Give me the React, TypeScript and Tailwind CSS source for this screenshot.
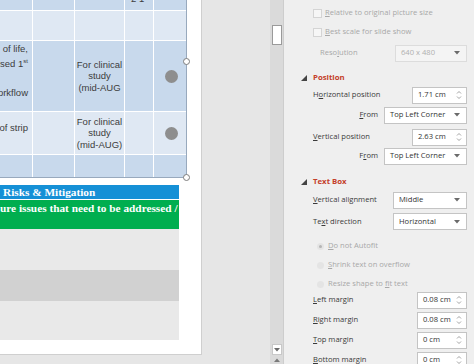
import React from "react";

const panelFont = { fontFamily: '"Open Sans", "Noto Sans", sans-serif' };

const DropArrow = () => (
  <svg width="6" height="4" viewBox="0 0 6 4" className="shrink-0">
    <polygon points="0,0 6,0 3,3.5" fill="#6b6b6b" />
  </svg>
);

const Spin = () => (
  <svg width="6" height="10" viewBox="0 0 6 10" className="shrink-0">
    <polyline points="1,3.5 3,1.5 5,3.5" fill="none" stroke="#8a8a8a" strokeWidth="0.8" />
    <polyline points="1,6.5 3,8.5 5,6.5" fill="none" stroke="#8a8a8a" strokeWidth="0.8" />
  </svg>
);

const Caret = () => (
  <svg width="6" height="6" viewBox="0 0 6 6" className="shrink-0">
    <polygon points="6,0 6,6 0,6" fill="#444" />
  </svg>
);

const U = ({ children }: { children: React.ReactNode }) => (
  <span className="underline underline-offset-[1px]">{children}</span>
);

const Select = ({ value, w, disabled }: { value: string; w: string; disabled?: boolean }) => (
  <div
    className={`${w} h-[17px] flex items-center justify-between pl-[5px] pr-[6px] border ${
      disabled ? "border-[#dcdcdc] bg-[#f4f4f4] text-[#b0b0b0]" : "border-[#c4c4c4] bg-white text-[#333]"
    }`}
  >
    <span>{value}</span>
    <DropArrow />
  </div>
);

const SpinBox = ({ value, w }: { value: string; w: string }) => (
  <div className={`${w} h-[17px] flex items-center justify-between pl-[5px] pr-[4px] border border-[#c4c4c4] bg-white text-[#333]`}>
    <span>{value}</span>
    <Spin />
  </div>
);

const Circle = () => <div className="w-[13px] h-[13px] rounded-full bg-[#8e8e8e]" />;

const Slide = () => {
  const dark = "bg-[#c8d9ec]";
  const light = "bg-[#dfe8f3]";
  const txt = "text-[9.5px] leading-[11.5px] text-[#3c3c3c]";
  return (
    <div className="w-[202px] h-[355px] bg-white border-r border-b border-[#cfcfcf] relative overflow-hidden" style={{ fontFamily: '"Liberation Sans", Arial, sans-serif' }}>
      {/* table */}
      <div className="grid grid-cols-[32px_41px_49px_28px_33px] grid-rows-[10px_29px_70px_42px_22px] gap-px bg-white w-[187px]">
        <div className={dark} />
        <div className={dark} />
        <div className={dark} />
        <div className={`${dark} overflow-hidden text-[9.5px] leading-[10px] text-[#3c3c3c] pl-[6px]`}>
          <div className="-mt-[6px]">2 1</div>
        </div>
        <div className={dark} />

        <div className={light} />
        <div className={light} />
        <div className={light} />
        <div className={light} />
        <div className={light} />

        <div className={`${dark} overflow-hidden text-[9.5px] leading-[14.5px] text-[#3c3c3c] pt-[1px] pr-[4px]`}>
          <div className="flex justify-end whitespace-nowrap">of life,</div>
          <div className="flex justify-end whitespace-nowrap">
            <span>used 1</span>
            <span className="text-[6px] leading-[8px]">st</span>
          </div>
          <div className="h-[14.5px]" />
          <div className="flex justify-end whitespace-nowrap">workflow</div>
        </div>
        <div className={dark} />
        <div className={`${dark} flex flex-col items-center justify-center text-center ${txt}`}>
          <div>For clinical</div>
          <div>study</div>
          <div>(mid-AUG</div>
        </div>
        <div className={dark} />
        <div className={`${dark} flex items-center justify-center pl-[1px]`}>
          <Circle />
        </div>

        <div className={`${light} overflow-hidden ${txt} pt-[10px] pr-[4px]`}>
          <div className="flex justify-end whitespace-nowrap">of strip</div>
        </div>
        <div className={light} />
        <div className={`${light} flex flex-col items-center justify-center text-center ${txt}`}>
          <div>For clinical</div>
          <div>study</div>
          <div>(mid-AUG)</div>
        </div>
        <div className={light} />
        <div className={`${light} flex items-center justify-center pl-[1px]`}>
          <Circle />
        </div>

        <div className={dark} />
        <div className={dark} />
        <div className={dark} />
        <div className={dark} />
        <div className={dark} />
      </div>

      {/* selection frame and handles */}
      <div className="absolute left-0 top-0 w-[187px] h-[178px] border-r border-b border-[#98a9bd] pointer-events-none" />
      <div className="absolute left-[183px] top-[58px] w-[7px] h-[7px] rounded-full bg-white border border-[#7d7d7d]" />
      <div className="absolute left-[183px] top-[174px] w-[7px] h-[7px] rounded-full bg-white border border-[#7d7d7d]" />

      {/* risks section */}
      <div className="mt-[8px] w-[179px]" style={{ fontFamily: '"Liberation Serif", "Times New Roman", serif' }}>
        <div className="h-[14px] bg-[#1590d6] text-white font-bold text-[11.3px] leading-[14px] pl-[3px] whitespace-nowrap">
          Risks &amp; Mitigation
        </div>
        <div className="h-[29px] mt-px bg-[#00ae4f] text-white font-bold text-[11.3px] leading-[13px] pt-[2px] whitespace-nowrap overflow-hidden">
          ure issues that need to be addressed /
        </div>
        <div className="h-[41px] bg-[#e9e9e9]" />
        <div className="h-[31px] bg-[#d1d1d1]" />
        <div className="h-[39px] bg-[#e9e9e9]" />
      </div>
    </div>
  );
};

const Scrollbar = () => (
  <div className="w-[13px] h-full bg-[#dadada] flex flex-col items-center">
    <div className="mt-[25px] w-[10px] h-[20px] bg-white border border-[#9a9a9a]" />
    <div className="flex-1" />
    <div className="w-[10px] h-[11px] bg-white border border-[#c8c8c8] flex items-center justify-center">
      <DropArrow />
    </div>
    <div className="h-[9px] w-full flex items-start justify-center pt-[3px]">
      <svg width="6" height="4" viewBox="0 0 6 4">
        <polygon points="0,4 6,4 3,0.5" fill="#7a7a7a" />
      </svg>
    </div>
  </div>
);

const Label = ({ children, dim }: { children: React.ReactNode; dim?: boolean }) => (
  <span className={dim ? "text-[#a8a8a8]" : "text-[#3a3a3a]"}>{children}</span>
);

const Panel = () => (
  <div className="flex-1 h-full bg-[#efefef] border-l border-[#cdcdcd] text-[7.6px] leading-none pr-[7px] overflow-hidden" style={panelFont}>
    <div className="h-[20px] mt-[3px] flex items-center pl-[29px] gap-[3px]">
      <div className="w-[9px] h-[9px] border border-[#d4d4d4] bg-[#f6f6f6]" />
      <Label dim>
        <U>R</U>elative to original picture size
      </Label>
    </div>
    <div className="h-[18px] flex items-center pl-[29px] gap-[3px]">
      <div className="w-[9px] h-[9px] border border-[#d4d4d4] bg-[#f6f6f6]" />
      <Label dim>
        <U>B</U>est scale for slide show
      </Label>
    </div>
    <div className="h-[20px] mt-[2px] flex items-center justify-between pl-[36px]">
      <Label dim>
        Reso<U>l</U>ution
      </Label>
      <Select value="640 x 480" w="w-[72px]" disabled />
    </div>

    <div className="h-[16px] mt-[7px] flex items-center pl-[17px] gap-[6px]">
      <Caret />
      <span className="font-bold text-[#c4402a] text-[7.8px]">Position</span>
    </div>
    <div className="h-[18px] flex items-center justify-between pl-[29px]">
      <Label>
        H<U>o</U>rizontal position
      </Label>
      <SpinBox value="1.71 cm" w="w-[55px]" />
    </div>
    <div className="h-[18px] mt-[2px] flex items-center justify-end gap-[6px]">
      <Label>
        <U>F</U>rom
      </Label>
      <Select value="Top Left Corner" w="w-[83px]" />
    </div>
    <div className="h-[18px] mt-[4px] flex items-center justify-between pl-[29px]">
      <Label>
        <U>V</U>ertical position
      </Label>
      <SpinBox value="2.63 cm" w="w-[55px]" />
    </div>
    <div className="h-[18px] mt-[1px] flex items-center justify-end gap-[6px]">
      <Label>
        F<U>r</U>om
      </Label>
      <Select value="Top Left Corner" w="w-[83px]" />
    </div>

    <div className="h-[16px] mt-[9px] flex items-center pl-[17px] gap-[6px]">
      <Caret />
      <span className="font-bold text-[#c4402a] text-[7.8px]">Text Box</span>
    </div>
    <div className="h-[16px] mt-[2px] flex items-center justify-between pl-[29px]">
      <Label>
        <U>V</U>ertical alignment
      </Label>
      <Select value="Middle" w="w-[74px]" />
    </div>
    <div className="h-[17px] mt-[5px] flex items-center justify-between pl-[29px]">
      <Label>
        Te<U>x</U>t direction
      </Label>
      <Select value="Horizontal" w="w-[74px]" />
    </div>

    <div className="h-[16px] mt-[8px] flex items-center pl-[33px] gap-[4px]">
      <div className="w-[7px] h-[7px] rounded-full bg-[#e4e4e4] flex items-center justify-center">
        <div className="w-[3px] h-[3px] rounded-full bg-[#b5b5b5]" />
      </div>
      <Label dim>
        <U>D</U>o not Autofit
      </Label>
    </div>
    <div className="h-[16px] mt-[3px] flex items-center pl-[33px] gap-[4px]">
      <div className="w-[7px] h-[7px] rounded-full bg-[#e4e4e4]" />
      <Label dim>
        <U>S</U>hrink text on overflow
      </Label>
    </div>
    <div className="h-[16px] mt-[3px] flex items-center pl-[33px] gap-[4px]">
      <div className="w-[7px] h-[7px] rounded-full bg-[#e4e4e4]" />
      <Label dim>
        Resize shape to <U>f</U>it text
      </Label>
    </div>

    {[
      ["L", "eft margin", "0.08 cm"],
      ["R", "ight margin", "0.08 cm"],
      ["T", "op margin", "0 cm"],
      ["B", "ottom margin", "0 cm"],
    ].map(([k, rest, v], i) => (
      <div key={i} className={`h-[16px] ${i === 0 ? "mt-0" : "mt-[4px]"} flex items-center justify-between pl-[29px]`}>
        <Label>
          <U>{k}</U>
          {rest}
        </Label>
        <SpinBox value={v} w="w-[50px]" />
      </div>
    ))}
  </div>
);

export default function App() {
  return (
    <div className="w-[474px] h-[364px] flex overflow-hidden bg-[#e6e6e6]">
      <div className="w-[270px] h-full bg-[#e6e6e6]">
        <Slide />
      </div>
      <Scrollbar />
      <Panel />
    </div>
  );
}
